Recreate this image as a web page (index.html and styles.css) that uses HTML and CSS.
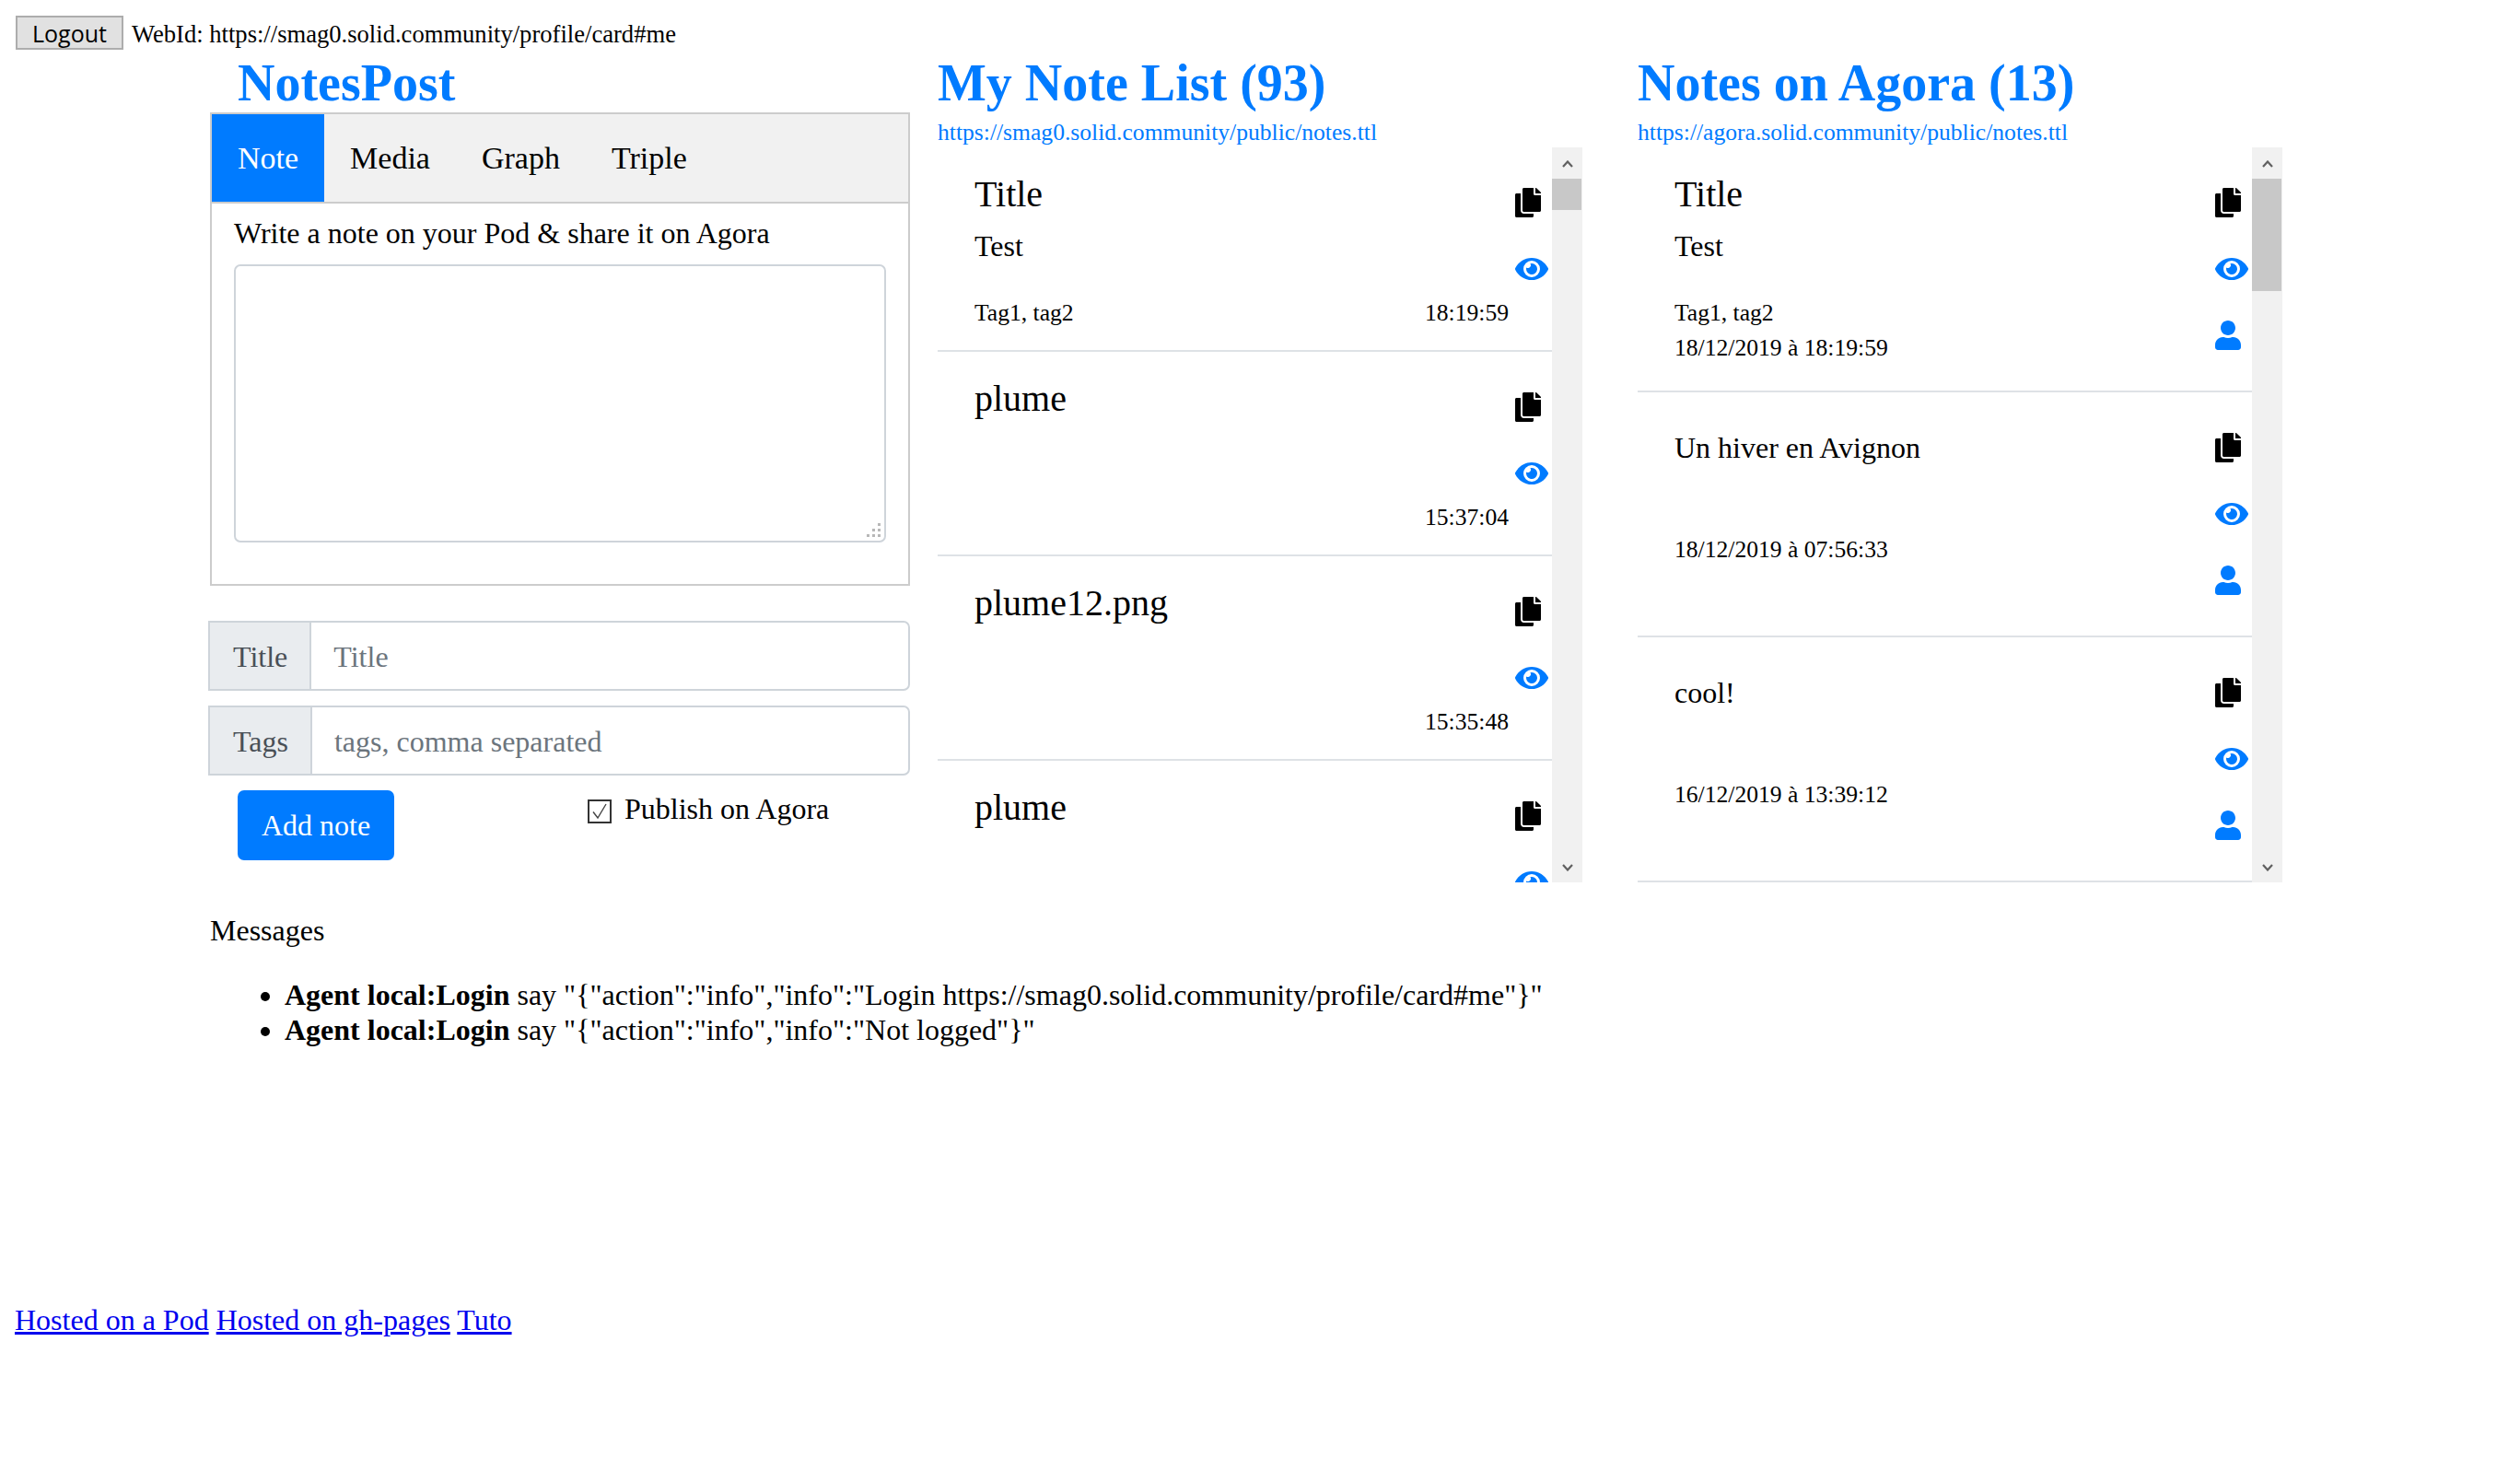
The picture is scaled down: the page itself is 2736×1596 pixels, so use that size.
FILE: index.html
```html
<!DOCTYPE html>
<html lang="en">
<head>
<meta charset="utf-8">
<title>NotesPost</title>
<link rel="stylesheet" href="styles.css">
</head>
<body>
<svg class="defs" width="0" height="0" aria-hidden="true">
  <symbol id="i-copy" viewBox="0 0 448 512"><path d="M320 448v40c0 13.255-10.745 24-24 24H24c-13.255 0-24-10.745-24-24V120c0-13.255 10.745-24 24-24h72v296c0 30.879 25.121 56 56 56h168zm0-344V0H152c-13.255 0-24 10.745-24 24v368c0 13.255 10.745 24 24 24h272c13.255 0 24-10.745 24-24V128H344c-13.2 0-24-10.8-24-24zm120.971-31.029L375.029 7.029A24 24 0 0 0 358.059 0H352v96h96v-6.059a24 24 0 0 0-7.029-16.97z"/></symbol>
  <symbol id="i-eye" viewBox="0 0 576 512"><path d="M572.52 241.4C518.29 135.59 410.93 64 288 64S57.68 135.64 3.48 241.41a32.35 32.35 0 0 0 0 29.19C57.71 376.41 165.07 448 288 448s230.32-71.64 284.52-177.41a32.35 32.35 0 0 0 0-29.19zM288 400a144 144 0 1 1 144-144 143.93 143.93 0 0 1-144 144zm0-240a95.31 95.31 0 0 0-25.31 3.79 47.85 47.85 0 0 1-66.9 66.9A95.78 95.78 0 1 0 288 160z"/></symbol>
  <symbol id="i-user" viewBox="0 0 448 512"><path d="M224 256c70.7 0 128-57.3 128-128S294.7 0 224 0 96 57.3 96 128s57.3 128 128 128zm89.6 32h-16.7c-22.2 10.3-46.9 16-72.9 16s-50.6-5.7-72.9-16h-16.7C60.2 288 0 348.2 0 422.4V464c0 26.5 21.5 48 48 48h352c26.5 0 48-21.5 48-48v-41.6c0-74.2-60.2-134.4-134.4-134.4z"/></symbol>
  <symbol id="i-up" viewBox="0 0 12 8"><path d="M1 7L6 1.5 11 7" fill="none" stroke="currentColor" stroke-width="2.2"/></symbol>
  <symbol id="i-down" viewBox="0 0 12 8"><path d="M1 1L6 6.5 11 1" fill="none" stroke="currentColor" stroke-width="2.2"/></symbol>
</svg>

<header class="topbar">
  <button class="logout" type="button">Logout</button>
  <span class="webid">WebId: https://smag0.solid.community/profile/card#me</span>
</header>

<main class="columns">
  <section class="col-post">
    <h1 class="title title-post">NotesPost</h1>
    <div class="panel">
      <div class="tabs">
        <button class="tab tab-active" type="button">Note</button>
        <button class="tab" type="button">Media</button>
        <button class="tab" type="button">Graph</button>
        <button class="tab" type="button">Triple</button>
      </div>
      <div class="tab-body">
        <p class="tab-lead">Write a note on your Pod &amp; share it on Agora</p>
        <div class="area-wrap">
          <textarea class="area"></textarea>
          <svg class="grip" width="17" height="17" viewBox="0 0 17 17" aria-hidden="true">
            <rect x="13" y="0" width="3" height="3"/><rect x="13" y="6" width="3" height="3"/><rect x="7" y="6" width="3" height="3"/>
            <rect x="13" y="12" width="3" height="3"/><rect x="7" y="12" width="3" height="3"/><rect x="1" y="12" width="3" height="3"/>
          </svg>
        </div>
      </div>
    </div>
    <div class="field field-first"><span class="field-label">Title</span><input class="field-input" placeholder="Title"></div>
    <div class="field"><span class="field-label">Tags</span><input class="field-input" placeholder="tags, comma separated"></div>
    <div class="actions">
      <button class="add" type="button">Add note</button>
      <label class="publish">
        <span class="check"><svg width="20" height="20" viewBox="0 0 20 20" aria-hidden="true"><path d="M3 10.5L8 17 17 2" fill="none" stroke="#444" stroke-width="1.4"/></svg></span>
        Publish on Agora
      </label>
    </div>
  </section>

  <section class="col-list">
    <h1 class="title">My Note List (93)</h1>
    <a class="source">https://smag0.solid.community/public/notes.ttl</a>
    <div class="scroller">
      <div class="list">
        <article class="note">
          <div class="note-main">
            <h2 class="note-title">Title</h2>
            <p class="note-body">Test</p>
            <div class="note-meta"><span>Tag1, tag2</span><span>18:19:59</span></div>
          </div>
          <div class="icons"><svg class="ic ic-copy"><use href="#i-copy"/></svg><svg class="ic ic-eye"><use href="#i-eye"/></svg></div>
        </article>
        <article class="note">
          <div class="note-main">
            <h2 class="note-title">plume</h2>
            <p class="note-body"></p>
            <div class="note-meta"><span></span><span>15:37:04</span></div>
          </div>
          <div class="icons"><svg class="ic ic-copy"><use href="#i-copy"/></svg><svg class="ic ic-eye"><use href="#i-eye"/></svg></div>
        </article>
        <article class="note">
          <div class="note-main">
            <h2 class="note-title">plume12.png</h2>
            <p class="note-body"></p>
            <div class="note-meta"><span></span><span>15:35:48</span></div>
          </div>
          <div class="icons"><svg class="ic ic-copy"><use href="#i-copy"/></svg><svg class="ic ic-eye"><use href="#i-eye"/></svg></div>
        </article>
        <article class="note">
          <div class="note-main">
            <h2 class="note-title">plume</h2>
          </div>
          <div class="icons"><svg class="ic ic-copy"><use href="#i-copy"/></svg><svg class="ic ic-eye"><use href="#i-eye"/></svg></div>
        </article>
      </div>
      <div class="bar">
        <div class="bar-btn"><svg class="chev"><use href="#i-up"/></svg></div>
        <div class="thumb thumb-small"></div>
        <div class="bar-btn bar-btn-end"><svg class="chev"><use href="#i-down"/></svg></div>
      </div>
    </div>
  </section>

  <section class="col-list">
    <h1 class="title">Notes on Agora (13)</h1>
    <a class="source">https://agora.solid.community/public/notes.ttl</a>
    <div class="scroller">
      <div class="list">
        <article class="note note-tall">
          <div class="note-main">
            <h2 class="note-title">Title</h2>
            <p class="note-body">Test</p>
            <div class="note-meta"><span>Tag1, tag2</span></div>
            <div class="note-date">18/12/2019 à 18:19:59</div>
          </div>
          <div class="icons"><svg class="ic ic-copy"><use href="#i-copy"/></svg><svg class="ic ic-eye"><use href="#i-eye"/></svg><svg class="ic ic-user"><use href="#i-user"/></svg></div>
        </article>
        <article class="note note-tall">
          <div class="note-main">
            <p class="note-text">Un hiver en Avignon</p>
            <div class="note-date note-date-far">18/12/2019 à 07:56:33</div>
          </div>
          <div class="icons"><svg class="ic ic-copy"><use href="#i-copy"/></svg><svg class="ic ic-eye"><use href="#i-eye"/></svg><svg class="ic ic-user"><use href="#i-user"/></svg></div>
        </article>
        <article class="note note-tall">
          <div class="note-main">
            <p class="note-text">cool!</p>
            <div class="note-date note-date-far">16/12/2019 à 13:39:12</div>
          </div>
          <div class="icons"><svg class="ic ic-copy"><use href="#i-copy"/></svg><svg class="ic ic-eye"><use href="#i-eye"/></svg><svg class="ic ic-user"><use href="#i-user"/></svg></div>
        </article>
      </div>
      <div class="bar">
        <div class="bar-btn"><svg class="chev"><use href="#i-up"/></svg></div>
        <div class="thumb thumb-large"></div>
        <div class="bar-btn bar-btn-end"><svg class="chev"><use href="#i-down"/></svg></div>
      </div>
    </div>
  </section>
</main>

<section class="messages">
  <p class="messages-title">Messages</p>
  <ul class="messages-list">
    <li><b>Agent local:Login</b> say "{"action":"info","info":"Login https://smag0.solid.community/profile/card#me"}"</li>
    <li><b>Agent local:Login</b> say "{"action":"info","info":"Not logged"}"</li>
  </ul>
</section>

<footer class="links">
  <a href="#">Hosted on a Pod</a> <a href="#">Hosted on gh-pages</a> <a href="#">Tuto</a>
</footer>
</body>
</html>
```

FILE: styles.css
```css
* { box-sizing: border-box; }
html, body { margin: 0; padding: 0; }
body {
  background: #fff;
  color: #000;
  font-family: "Liberation Serif", "Times New Roman", serif;
  font-size: 32px;
  line-height: 38px;
}
.defs { position: absolute; }

.topbar {
  display: flex;
  align-items: center;
  height: 37px;
  margin: 17px 0 0 17px;
}
.logout {
  width: 117px;
  height: 37px;
  padding: 0;
  background: #e1e1e1;
  border: 2px solid #adadad;
  font-family: "Open Sans", "Liberation Sans", sans-serif;
  font-size: 25px;
  line-height: 30px;
  color: #000;
}
.webid { margin-left: 9px; padding-top: 4px; font-size: 26.6px; line-height: 37px; }

.columns {
  display: grid;
  grid-template-columns: 760px 730px 730px;
  column-gap: 30px;
  margin-left: 228px;
}
.title {
  margin: 0;
  padding-top: 3px;
  height: 68px;
  font-size: 56px;
  line-height: 66px;
  font-weight: 700;
  color: #007bff;
}
.title-post { padding-left: 30px; }

.panel { width: 760px; height: 514px; border: 2px solid #ccc; }
.tabs {
  display: flex;
  height: 97px;
  background: #f1f1f1;
  border-bottom: 2px solid #ccc;
}
.tab {
  padding: 0 28px;
  border: 0;
  background: transparent;
  font: inherit;
  font-size: 34px;
  color: #000;
}
.tab-active { background: #007bff; color: #fff; }
.tab-body { padding: 13px 24px 0; }
.tab-lead { margin: 0 0 15px; }
.area-wrap { position: relative; height: 302px; }
.area {
  display: block;
  width: 100%;
  height: 100%;
  border: 2px solid #ced4da;
  border-radius: 7px;
  background: #fff;
  resize: none;
  outline: 0;
}
.grip { position: absolute; right: 5px; bottom: 4px; fill: #b8b8b8; }

.field {
  display: flex;
  width: 762px;
  height: 76px;
  margin: 16px 0 0 -2px;
}
.field-first { margin-top: 38px; }
.field-label {
  display: flex;
  align-items: center;
  padding: 2px 24px 0 25px;
  background: #e9ecef;
  border: 2px solid #ced4da;
  color: #495057;
}
.field-input {
  flex: 1;
  min-width: 0;
  padding: 2px 24px 0;
  margin-left: -2px;
  border: 2px solid #ced4da;
  border-radius: 0 7px 7px 0;
  font: inherit;
  outline: 0;
}
.field-input::placeholder { color: #6c757d; opacity: 1; }

.actions { display: flex; align-items: flex-start; margin-top: 16px; padding-left: 30px; }
.add {
  width: 170px;
  height: 76px;
  padding: 0;
  background: #007bff;
  border: 0;
  border-radius: 7px;
  color: #fff;
  font: inherit;
}
.publish { display: flex; align-items: flex-start; margin-left: 210px; padding-top: 1px; }
.check {
  display: flex;
  align-items: center;
  justify-content: center;
  width: 26px;
  height: 26px;
  margin: 9px 14px 0 0;
  background: #fff;
  border: 2px solid #333;
}

.source {
  display: block;
  height: 38px;
  padding-top: 3px;
  font-size: 25.6px;
  line-height: 38px;
  color: #007bff;
}
.scroller { display: flex; width: 700px; height: 798px; }
.list { flex: 1; min-width: 0; overflow: hidden; }
.note { display: flex; border-bottom: 2px solid #dee2e6; }
.note-tall { min-height: 266px; }
.note-main { flex: 1; min-width: 0; padding: 33px 7px 22px 40px; }
.note-title { margin: 0; font-size: 40px; line-height: 36px; font-weight: 400; }
.note-body { min-height: 38px; margin: 19px 0 0; }
.note-meta {
  display: flex;
  justify-content: space-between;
  min-height: 36px;
  margin-top: 36px;
  font-size: 25.6px;
  line-height: 36px;
}
.note-date { margin-top: 1px; font-size: 25.6px; line-height: 37px; }
.note-text { margin: 8px 0 0; }
.note-date-far { margin-top: 73px; }
.icons {
  display: flex;
  flex-direction: column;
  flex: none;
  gap: 40px;
  width: 40px;
  padding-top: 44px;
}
.ic { display: block; flex: none; height: 32px; }
.ic-copy { width: 28px; fill: #000; }
.ic-eye { width: 36px; fill: #007bff; }
.ic-user { width: 28px; fill: #007bff; }

.bar {
  display: flex;
  flex-direction: column;
  flex: none;
  width: 33px;
  background: #f1f1f1;
}
.bar-btn {
  display: flex;
  align-items: center;
  justify-content: center;
  flex: none;
  height: 34px;
  padding-top: 1px;
  color: #606060;
}
.bar-btn-end { margin-top: auto; }
.chev { width: 12px; height: 8px; }
.thumb { width: 32px; background: #c8c8c8; }
.thumb-small { height: 34px; }
.thumb-large { height: 122px; }

.messages { margin: 33px 0 0 228px; }
.messages-title { margin: 0; }
.messages-list { margin: 32px 0 0; padding: 0 0 0 81px; }

.links { margin: 277px 0 0 16px; }
.links a { color: #0000ee; }
```
